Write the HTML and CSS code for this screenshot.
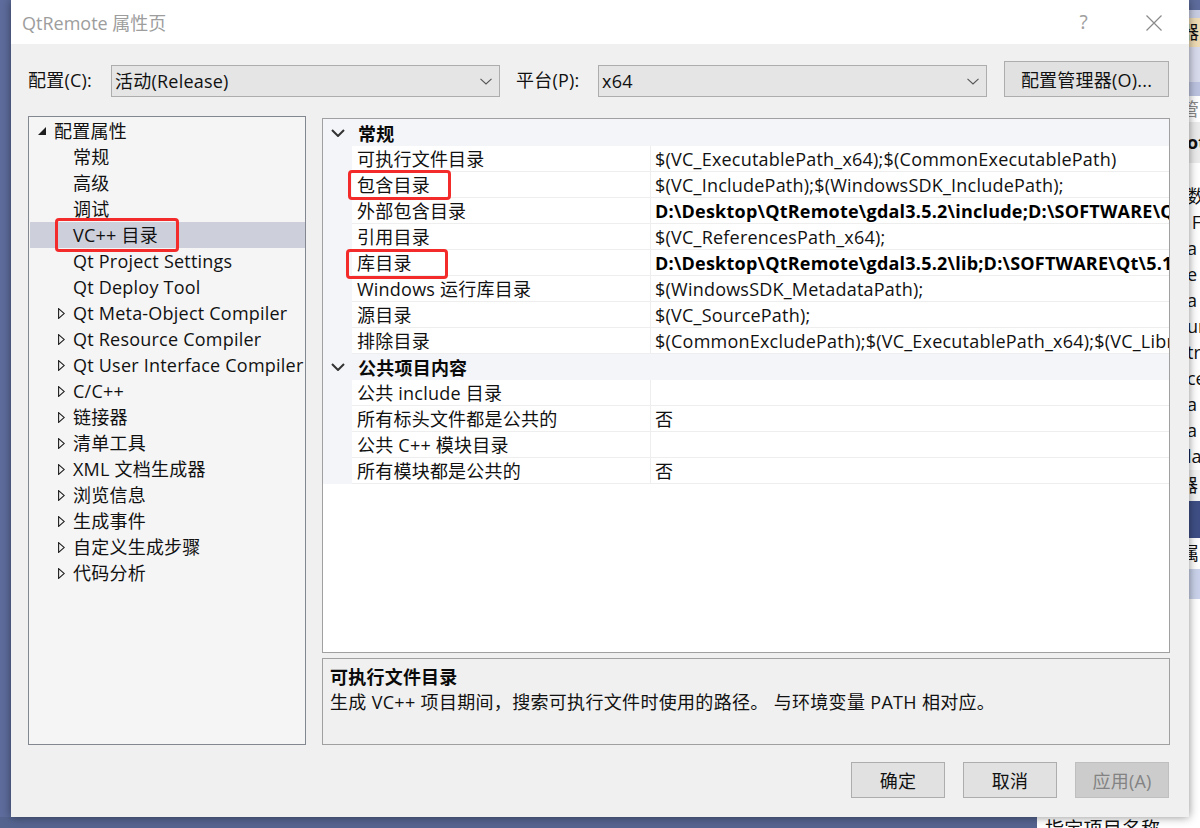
FILE: index.html
```html
<!DOCTYPE html>
<html lang="zh-CN">
<head>
<meta charset="utf-8">
<title>QtRemote 属性页</title>
<link rel="stylesheet" href="styles.css">
</head>
<body>
<div class="desktop">
  <div class="dialog">
    <div class="titlebar">
      <span class="title">QtRemote 属性页</span>
      <span class="tb-help">?</span>
      <svg class="tb-close" width="16" height="16" viewBox="0 0 16 16"><path d="M0.5 0.5 L15.5 15.5 M15.5 0.5 L0.5 15.5" stroke="#8a8a8a" stroke-width="1.2" fill="none"/></svg>
    </div>
    <div class="body">
      <div class="config-row">
        <span class="lbl lbl-config">配置(C):</span>
        <div class="combo"><span class="combo-text">活动(Release)</span><svg class="combo-chev" width="12" height="7" viewBox="0 0 12 7"><path d="M0.5 0.8 L6 6 L11.5 0.8" stroke="#555" stroke-width="1.1" fill="none"/></svg></div>
        <span class="lbl lbl-platform">平台(P):</span>
        <div class="combo"><span class="combo-text">x64</span><svg class="combo-chev" width="12" height="7" viewBox="0 0 12 7"><path d="M0.5 0.8 L6 6 L11.5 0.8" stroke="#555" stroke-width="1.1" fill="none"/></svg></div>
        <button class="btn btn-mgr">配置管理器(O)...</button>
      </div>
      <div class="main">
        <div class="tree">
          <div class="ti lv0"><span class="arr"><svg width="8" height="8" viewBox="0 0 8 8"><polygon points="8,0 8,8 0,8" fill="#1e1e1e"/></svg></span>配置属性</div>
          <div class="ti lv1"><span class="arr"></span>常规</div>
          <div class="ti lv1"><span class="arr"></span>高级</div>
          <div class="ti lv1"><span class="arr"></span>调试</div>
          <div class="ti lv1 sel"><span class="arr"></span>VC++ 目录<span class="mark mark-vc"></span></div>
          <div class="ti lv1"><span class="arr"></span>Qt Project Settings</div>
          <div class="ti lv1"><span class="arr"></span>Qt Deploy Tool</div>
          <div class="ti lv1"><span class="arr"><svg width="7" height="11" viewBox="0 0 7 11"><polygon points="0.6,0.6 6.3,5.5 0.6,10.4" fill="none" stroke="#1e1e1e" stroke-width="1.1"/></svg></span>Qt Meta-Object Compiler</div>
          <div class="ti lv1"><span class="arr"><svg width="7" height="11" viewBox="0 0 7 11"><polygon points="0.6,0.6 6.3,5.5 0.6,10.4" fill="none" stroke="#1e1e1e" stroke-width="1.1"/></svg></span>Qt Resource Compiler</div>
          <div class="ti lv1"><span class="arr"><svg width="7" height="11" viewBox="0 0 7 11"><polygon points="0.6,0.6 6.3,5.5 0.6,10.4" fill="none" stroke="#1e1e1e" stroke-width="1.1"/></svg></span>Qt User Interface Compiler</div>
          <div class="ti lv1"><span class="arr"><svg width="7" height="11" viewBox="0 0 7 11"><polygon points="0.6,0.6 6.3,5.5 0.6,10.4" fill="none" stroke="#1e1e1e" stroke-width="1.1"/></svg></span>C/C++</div>
          <div class="ti lv1"><span class="arr"><svg width="7" height="11" viewBox="0 0 7 11"><polygon points="0.6,0.6 6.3,5.5 0.6,10.4" fill="none" stroke="#1e1e1e" stroke-width="1.1"/></svg></span>链接器</div>
          <div class="ti lv1"><span class="arr"><svg width="7" height="11" viewBox="0 0 7 11"><polygon points="0.6,0.6 6.3,5.5 0.6,10.4" fill="none" stroke="#1e1e1e" stroke-width="1.1"/></svg></span>清单工具</div>
          <div class="ti lv1"><span class="arr"><svg width="7" height="11" viewBox="0 0 7 11"><polygon points="0.6,0.6 6.3,5.5 0.6,10.4" fill="none" stroke="#1e1e1e" stroke-width="1.1"/></svg></span>XML 文档生成器</div>
          <div class="ti lv1"><span class="arr"><svg width="7" height="11" viewBox="0 0 7 11"><polygon points="0.6,0.6 6.3,5.5 0.6,10.4" fill="none" stroke="#1e1e1e" stroke-width="1.1"/></svg></span>浏览信息</div>
          <div class="ti lv1"><span class="arr"><svg width="7" height="11" viewBox="0 0 7 11"><polygon points="0.6,0.6 6.3,5.5 0.6,10.4" fill="none" stroke="#1e1e1e" stroke-width="1.1"/></svg></span>生成事件</div>
          <div class="ti lv1"><span class="arr"><svg width="7" height="11" viewBox="0 0 7 11"><polygon points="0.6,0.6 6.3,5.5 0.6,10.4" fill="none" stroke="#1e1e1e" stroke-width="1.1"/></svg></span>自定义生成步骤</div>
          <div class="ti lv1"><span class="arr"><svg width="7" height="11" viewBox="0 0 7 11"><polygon points="0.6,0.6 6.3,5.5 0.6,10.4" fill="none" stroke="#1e1e1e" stroke-width="1.1"/></svg></span>代码分析</div>
        </div>
        <div class="right">
          <div class="grid">
            <div class="grp grp-first"><span class="gchev"><svg width="14" height="8" viewBox="0 0 14 8"><path d="M1 1 L7 7 L13 1" stroke="#333" stroke-width="2" fill="none"/></svg></span><span class="gtext">常规</span></div>
            <div class="row"><span class="gut"></span><span class="lab">可执行文件目录</span><span class="val">$(VC_ExecutablePath_x64);$(CommonExecutablePath)</span></div>
            <div class="row"><span class="gut"></span><span class="lab">包含目录<span class="mark mark-inc"></span></span><span class="val">$(VC_IncludePath);$(WindowsSDK_IncludePath);</span></div>
            <div class="row"><span class="gut"></span><span class="lab">外部包含目录</span><span class="val bold">D:\Desktop\QtRemote\gdal3.5.2\include;D:\SOFTWARE\Qt</span></div>
            <div class="row"><span class="gut"></span><span class="lab">引用目录</span><span class="val">$(VC_ReferencesPath_x64);</span></div>
            <div class="row"><span class="gut"></span><span class="lab">库目录<span class="mark mark-lib"></span></span><span class="val bold">D:\Desktop\QtRemote\gdal3.5.2\lib;D:\SOFTWARE\Qt\5.15</span></div>
            <div class="row"><span class="gut"></span><span class="lab">Windows 运行库目录</span><span class="val">$(WindowsSDK_MetadataPath);</span></div>
            <div class="row"><span class="gut"></span><span class="lab">源目录</span><span class="val">$(VC_SourcePath);</span></div>
            <div class="row"><span class="gut"></span><span class="lab">排除目录</span><span class="val">$(CommonExcludePath);$(VC_ExecutablePath_x64);$(VC_Libr</span></div>
            <div class="grp"><span class="gchev"><svg width="14" height="8" viewBox="0 0 14 8"><path d="M1 1 L7 7 L13 1" stroke="#333" stroke-width="2" fill="none"/></svg></span><span class="gtext">公共项目内容</span></div>
            <div class="row"><span class="gut"></span><span class="lab">公共 include 目录</span><span class="val"></span></div>
            <div class="row"><span class="gut"></span><span class="lab">所有标头文件都是公共的</span><span class="val">否</span></div>
            <div class="row"><span class="gut"></span><span class="lab">公共 C++ 模块目录</span><span class="val"></span></div>
            <div class="row"><span class="gut"></span><span class="lab">所有模块都是公共的</span><span class="val">否</span></div>
          </div>
          <div class="desc">
            <div class="desc-title">可执行文件目录</div>
            <div class="desc-text">生成 VC++ 项目期间，搜索可执行文件时使用的路径。 与环境变量 PATH 相对应。</div>
          </div>
        </div>
      </div>
      <div class="buttons">
        <button class="btn">确定</button>
        <button class="btn">取消</button>
        <button class="btn btn-disabled">应用(A)</button>
      </div>
    </div>
  </div>
  <div class="side">
    <div class="s-top"></div>
    <div class="s-top2"></div>
    <div class="s-tan">器</div>
    <div class="s-lav"></div>
    <div class="s-lav2"></div>
    <div class="s-w1">管</div>
    <div class="s-grey">ot</div>
    <div class="s-lines">
      <div>数</div><div>&nbsp;F</div><div>a</div><div>e</div><div>a</div><div>ur</div><div>tr</div><div>ce</div><div>a</div><div>a</div><div>la</div>
    </div>
    <div class="s-w2">器</div>
    <div class="s-blue"></div>
    <div class="s-w3">属</div>
    <div class="s-light"></div>
    <div class="s-rest"></div>
  </div>
  <div class="bottom">
    <div class="b-blue"></div>
    <div class="b-white"><span class="b-text">指定项目名称</span></div>
  </div>
</div>
</body>
</html>
```

FILE: styles.css
```css
* { box-sizing: border-box; }
html, body { margin: 0; padding: 0; }
body {
  width: 1200px;
  height: 828px;
  overflow: hidden;
  background: #5d6c9c;
  font-family: "Open Sans", "Noto Sans CJK SC", sans-serif;
  color: #111;
  letter-spacing: 0.22px;
}
.desktop {
  display: grid;
  grid-template-columns: 11px 1178px 11px;
  grid-template-rows: 817px 11px;
  width: 1200px;
  height: 828px;
}
.dialog {
  grid-column: 2;
  grid-row: 1;
  background: #f0f0f0;
  display: flex;
  flex-direction: column;
  position: relative;
  z-index: 1;
  box-shadow: 0 0 9px rgba(0, 0, 0, 0.45);
}
.titlebar {
  height: 44px;
  flex: none;
  background: #fff;
  display: flex;
  align-items: center;
  padding-left: 11px;
  padding-right: 27px;
}
.title { flex: 1; font-size: 18px; color: #9d9d9d; letter-spacing: 0; }
.tb-help { font-size: 19px; color: #a0a0a0; margin-right: 58px; font-family: "Noto Sans", sans-serif; }
.tb-close { display: block; margin-top: 1px; }

.body {
  flex: 1;
  display: flex;
  flex-direction: column;
  padding: 17px 19px 19px 17px;
}
.config-row { display: flex; height: 36px; flex: none; }
.lbl { font-size: 18px; line-height: 32px; margin-top: 3px; white-space: nowrap; }
.lbl-config { width: 83px; }
.lbl-platform { width: 82px; margin-left: 16px; }
.combo {
  width: 389px;
  height: 32px;
  margin-top: 4px;
  background: #e5e5e5;
  border: 1px solid #adadad;
  display: flex;
  align-items: center;
  padding-left: 3px;
  padding-right: 7px;
}
.combo-text { flex: 1; font-size: 18px; line-height: 30px; }
.combo-chev { display: block; }
.btn {
  font-family: inherit;
  letter-spacing: inherit;
  font-size: 18px;
  color: #111;
  background: #e1e1e1;
  border: 1px solid #adadad;
  width: 94px;
  height: 36px;
  padding: 0;
}
.btn-mgr { width: 165px; margin-left: 17px; }
.btn-disabled { background: #cccccc; border-color: #bfbfbf; color: #838383; }

.main { display: flex; gap: 16px; margin-top: 19px; height: 629px; flex: none; }
.tree {
  width: 278px;
  flex: none;
  border: 1px solid #828790;
  background: #f5f5f5;
  padding-top: 1px;
}
.ti {
  height: 26px;
  display: flex;
  align-items: center;
  font-size: 18px;
  line-height: 26px;
  white-space: nowrap;
  position: relative;
}
.ti .arr { display: flex; align-items: center; flex: none; }
.lv0 { padding-left: 9px; }
.lv0 .arr { width: 16px; }
.lv1 { padding-left: 29px; }
.lv1 .arr { width: 15px; }
.ti.sel { background: #cdcfdb; margin-left: 1px; padding-left: 28px; }

.mark {
  position: absolute;
  border: 3px solid #f42b2b;
  border-radius: 4px;
  pointer-events: none;
}
.mark-vc { left: 25px; top: -4px; width: 124px; height: 34px; }
.mark-inc { left: -4px; top: -2px; width: 103px; height: 30px; }
.mark-lib { left: -6px; top: -1px; width: 102px; height: 30px; }

.right { width: 848px; flex: none; display: flex; flex-direction: column; }
.grid {
  margin-top: 2px;
  height: 537px;
  border: 1px solid #a0a0a0;
  background: #fff;
  overflow: hidden;
}
.grp {
  height: 26px;
  display: flex;
  align-items: center;
  background: #f3f5f9;
  font-size: 18px;
  font-weight: bold;
  color: #0a0a0a;
}
.grp-first { height: 27px; }
.gchev { width: 29px; flex: none; display: flex; align-items: center; padding-left: 8px; }
.gtext { padding-left: 6px; }
.row { display: flex; height: 26px; font-size: 18px; line-height: 26px; }
.gut { width: 29px; flex: none; background: #f3f5f9; }
.lab {
  width: 299px;
  flex: none;
  padding-left: 5px;
  border-bottom: 1px solid #eeeeee;
  border-right: 1px solid #eeeeee;
  white-space: nowrap;
  position: relative;
}
.val {
  flex: 1;
  padding-left: 4px;
  border-bottom: 1px solid #eeeeee;
  white-space: nowrap;
  overflow: hidden;
}
.val.bold { font-weight: bold; color: #000; }

.desc {
  margin-top: 5px;
  height: 87px;
  border: 1px solid #a0a0a0;
  background: #f0f0f0;
  padding: 6px 7px 4px;
}
.desc-title { font-size: 18px; font-weight: bold; line-height: 24px; color: #0a0a0a; }
.desc-text { font-size: 18px; line-height: 26px; letter-spacing: 0.32px; }

.buttons {
  display: flex;
  justify-content: flex-end;
  gap: 18px;
  margin-top: 17px;
  margin-right: 1px;
  flex: none;
}

.side {
  grid-column: 3;
  grid-row: 1;
  display: flex;
  flex-direction: column;
  overflow: hidden;
  font-size: 18px;
  background: #fff;
  letter-spacing: 0;
}
.side > div { overflow: hidden; white-space: nowrap; flex: none; }
.s-top { height: 10px; background: #5d6c9c; }
.s-top2 { height: 8px; background: #c8cde3; }
.s-tan { height: 29px; background: #efdcb4; line-height: 29px; text-indent: -8px; }
.s-lav { height: 35px; background: #d8dbec; }
.s-lav2 { height: 14px; background: #bcc3e0; }
.s-w1 { height: 26px; line-height: 26px; color: #8a8a8a; text-indent: -8px; }
.s-grey { height: 41px; background: #ececec; font-weight: bold; line-height: 41px; text-indent: -2px; }
.s-lines { height: 307px; padding-top: 20px; line-height: 26px; }
.s-lines div { height: 26px; text-indent: -2px; }
.s-w2 { height: 31px; line-height: 31px; text-indent: -9px; background: #f4f4f4; }
.s-blue { height: 37px; background: #3f4f86; }
.s-w3 { height: 31px; line-height: 31px; text-indent: -8px; }
.s-light { height: 30px; background: #c9d2ea; }
.s-rest { flex: 1 !important; background: #fff; }

.bottom { grid-column: 1 / 4; grid-row: 2; display: flex; overflow: hidden; }
.b-blue { width: 1037px; background: #55648f; }
.b-white { flex: 1; background: #fff; overflow: hidden; padding-left: 8px; }
.b-text { font-size: 19px; line-height: 24px; display: block; color: #111; }
```
